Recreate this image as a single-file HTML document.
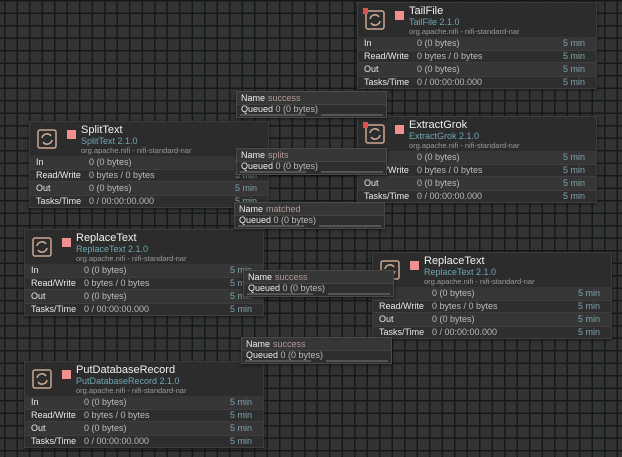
<!DOCTYPE html>
<html><head><meta charset="utf-8"><style>
*{margin:0;padding:0;box-sizing:border-box}
body{width:622px;height:457px;overflow:hidden;position:relative;font-family:"Liberation Sans",sans-serif;
background-color:#333;
background-image:linear-gradient(#141a18 1.5px,transparent 1.5px),linear-gradient(90deg,#141a18 1.5px,transparent 1.5px);
background-size:12.5px 12.5px;background-position:4px 0px}
.p{position:absolute;width:240px;height:87px;background:#2c2c2c;border:1px solid #3c3c3c;box-shadow:0 1px 3px rgba(0,0,0,.6)}
.ic{position:absolute;left:7px;top:7px;width:20px;height:20px}
.sq{position:absolute;left:37px;top:8px;width:9px;height:9px;background:#f29090}
.t{position:absolute;left:51px;top:2px;font-size:11px;color:#f0f0f0}
.ty{position:absolute;left:51px;top:14px;font-size:9px;color:#6fa6b3}
.b{position:absolute;left:51px;top:24px;font-size:7.5px;color:#9a9a9a}
.r{position:absolute;left:0;width:238px;height:13px;font-size:9px;line-height:13px;color:#e8e8e8}
.r.a{background:#363636}
.r.d{background:#2e2e2e;border-top:1px solid #3e3e3e;border-bottom:1px solid #3e3e3e;line-height:11px}
.r span{position:absolute}
.l{left:6px}.v{left:59px;color:#bbb}.m{right:11px;color:#7fa3ad}
.cn{position:absolute;width:151px;height:27px;background:#2e2e2e;border:1px solid #4a4a4a;font-size:9px;color:#eee;box-shadow:0 1px 3px rgba(0,0,0,.6)}
.cn .n{position:absolute;left:0;top:0;width:149px;height:13px;background:#363636;border-bottom:1px solid #444;line-height:12px;padding-left:4px}
.cn .n i{font-style:normal;color:#b09a96;margin-left:3px}
.cn .q{position:absolute;left:4px;top:12px;line-height:11px}
.cn .q i{font-style:normal;color:#bbb}
.cn .bar1{position:absolute;left:3px;bottom:1px;width:66px;height:2px;background:#555}
.cn .bar2{position:absolute;left:84px;bottom:1px;width:62px;height:2px;background:#555}
</style></head><body>

<svg width="0" height="0" style="position:absolute"><defs>
<symbol id="i" viewBox="0 0 20 20"><rect x="1" y="1" width="18" height="18" rx="2" fill="none" stroke="#c9a894" stroke-width="1.5"/><path d="M5 9 A5 5 0 0 1 14 7" fill="none" stroke="#c9a894" stroke-width="1.6"/><path d="M15 11 A5 5 0 0 1 6 13" fill="none" stroke="#c9a894" stroke-width="1.6"/></symbol>
</defs></svg>

<div class="p" style="left:357px;top:2px"><svg class="ic"><use href="#i"/></svg><div style="position:absolute;left:5px;top:5px;width:5px;height:6px;background:#e05050"></div><div class="sq"></div><div class="t">TailFile</div><div class="ty">TailFile 2.1.0</div><div class="b">org.apache.nifi - nifi-standard-nar</div>
<div class="r a" style="top:34px"><span class="l">In</span><span class="v">0 (0 bytes)</span><span class="m">5 min</span></div>
<div class="r d" style="top:47px"><span class="l">Read/Write</span><span class="v">0 bytes / 0 bytes</span><span class="m">5 min</span></div>
<div class="r a" style="top:60px"><span class="l">Out</span><span class="v">0 (0 bytes)</span><span class="m">5 min</span></div>
<div class="r d" style="top:73px"><span class="l">Tasks/Time</span><span class="v">0 / 00:00:00.000</span><span class="m">5 min</span></div></div>

<div class="p" style="left:29px;top:121px"><svg class="ic"><use href="#i"/></svg><div class="sq"></div><div class="t">SplitText</div><div class="ty">SplitText 2.1.0</div><div class="b">org.apache.nifi - nifi-standard-nar</div>
<div class="r a" style="top:34px"><span class="l">In</span><span class="v">0 (0 bytes)</span><span class="m">5 min</span></div>
<div class="r d" style="top:47px"><span class="l">Read/Write</span><span class="v">0 bytes / 0 bytes</span><span class="m">5 min</span></div>
<div class="r a" style="top:60px"><span class="l">Out</span><span class="v">0 (0 bytes)</span><span class="m">5 min</span></div>
<div class="r d" style="top:73px"><span class="l">Tasks/Time</span><span class="v">0 / 00:00:00.000</span><span class="m">5 min</span></div></div>

<div class="p" style="left:357px;top:116px"><svg class="ic"><use href="#i"/></svg><div style="position:absolute;left:5px;top:5px;width:5px;height:6px;background:#e05050"></div><div class="sq"></div><div class="t">ExtractGrok</div><div class="ty">ExtractGrok 2.1.0</div><div class="b">org.apache.nifi - nifi-standard-nar</div>
<div class="r a" style="top:34px"><span class="l">In</span><span class="v">0 (0 bytes)</span><span class="m">5 min</span></div>
<div class="r d" style="top:47px"><span class="l">Read/Write</span><span class="v">0 bytes / 0 bytes</span><span class="m">5 min</span></div>
<div class="r a" style="top:60px"><span class="l">Out</span><span class="v">0 (0 bytes)</span><span class="m">5 min</span></div>
<div class="r d" style="top:73px"><span class="l">Tasks/Time</span><span class="v">0 / 00:00:00.000</span><span class="m">5 min</span></div></div>

<div class="p" style="left:24px;top:229px"><svg class="ic"><use href="#i"/></svg><div class="sq"></div><div class="t">ReplaceText</div><div class="ty">ReplaceText 2.1.0</div><div class="b">org.apache.nifi - nifi-standard-nar</div>
<div class="r a" style="top:34px"><span class="l">In</span><span class="v">0 (0 bytes)</span><span class="m">5 min</span></div>
<div class="r d" style="top:47px"><span class="l">Read/Write</span><span class="v">0 bytes / 0 bytes</span><span class="m">5 min</span></div>
<div class="r a" style="top:60px"><span class="l">Out</span><span class="v">0 (0 bytes)</span><span class="m">5 min</span></div>
<div class="r d" style="top:73px"><span class="l">Tasks/Time</span><span class="v">0 / 00:00:00.000</span><span class="m">5 min</span></div></div>

<div class="p" style="left:372px;top:252px"><svg class="ic"><use href="#i"/></svg><div class="sq"></div><div class="t">ReplaceText</div><div class="ty">ReplaceText 2.1.0</div><div class="b">org.apache.nifi - nifi-standard-nar</div>
<div class="r a" style="top:34px"><span class="l">In</span><span class="v">0 (0 bytes)</span><span class="m">5 min</span></div>
<div class="r d" style="top:47px"><span class="l">Read/Write</span><span class="v">0 bytes / 0 bytes</span><span class="m">5 min</span></div>
<div class="r a" style="top:60px"><span class="l">Out</span><span class="v">0 (0 bytes)</span><span class="m">5 min</span></div>
<div class="r d" style="top:73px"><span class="l">Tasks/Time</span><span class="v">0 / 00:00:00.000</span><span class="m">5 min</span></div></div>

<div class="p" style="left:24px;top:361px"><svg class="ic"><use href="#i"/></svg><div class="sq"></div><div class="t">PutDatabaseRecord</div><div class="ty">PutDatabaseRecord 2.1.0</div><div class="b">org.apache.nifi - nifi-standard-nar</div>
<div class="r a" style="top:34px"><span class="l">In</span><span class="v">0 (0 bytes)</span><span class="m">5 min</span></div>
<div class="r d" style="top:47px"><span class="l">Read/Write</span><span class="v">0 bytes / 0 bytes</span><span class="m">5 min</span></div>
<div class="r a" style="top:60px"><span class="l">Out</span><span class="v">0 (0 bytes)</span><span class="m">5 min</span></div>
<div class="r d" style="top:73px"><span class="l">Tasks/Time</span><span class="v">0 / 00:00:00.000</span><span class="m">5 min</span></div></div>

<div class="cn" style="left:236px;top:91px"><div class="n">Name<i>success</i></div><div class="q">Queued <i>0 (0 bytes)</i></div><div class="bar1"></div><div class="bar2"></div></div>
<div class="cn" style="left:236px;top:148px"><div class="n">Name<i>splits</i></div><div class="q">Queued <i>0 (0 bytes)</i></div><div class="bar1"></div><div class="bar2"></div></div>
<div class="cn" style="left:234px;top:202px"><div class="n">Name<i>matched</i></div><div class="q">Queued <i>0 (0 bytes)</i></div><div class="bar1"></div><div class="bar2"></div></div>
<div class="cn" style="left:243px;top:270px"><div class="n">Name<i>success</i></div><div class="q">Queued <i>0 (0 bytes)</i></div><div class="bar1"></div><div class="bar2"></div></div>
<div class="cn" style="left:241px;top:337px"><div class="n">Name<i>success</i></div><div class="q">Queued <i>0 (0 bytes)</i></div><div class="bar1"></div><div class="bar2"></div></div>
</body></html>
